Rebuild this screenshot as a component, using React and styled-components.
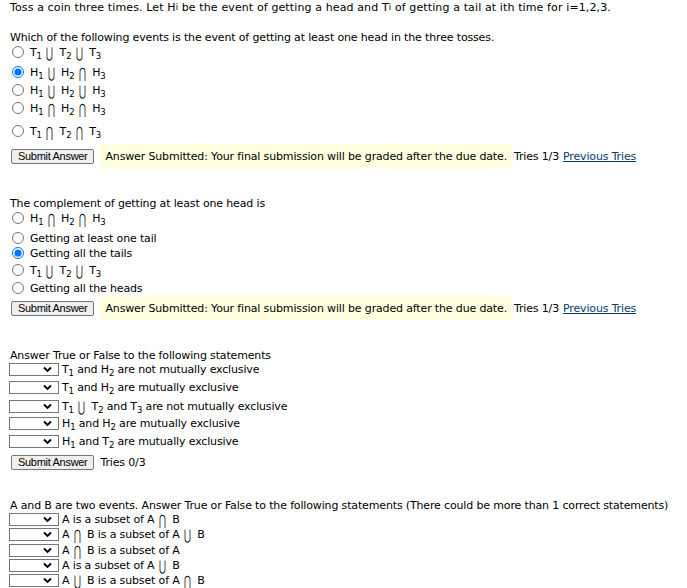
import React from "react";
import styled, { createGlobalStyle } from "styled-components";

const GlobalStyle = createGlobalStyle`
  body {
    margin: 0;
    background: #fff;
    color: #000;
    font-family: "DejaVu Sans", Verdana, sans-serif;
    font-size: 11px;
    letter-spacing: -0.15px;
  }
`;

const Page = styled.div`
  display: flex;
  flex-direction: column;
  align-items: flex-start;
  padding-left: 10px;
`;

const Line = styled.div`
  display: flex;
  align-items: center;
  height: ${(p) => p.$h || 14}px;
  margin-top: ${(p) => p.$mt || 0}px;
  white-space: nowrap;
  ${(p) => (p.$ls != null ? `letter-spacing: ${p.$ls}px;` : "")}
`;

const Option = styled.label`
  display: flex;
  align-items: center;
  height: 16px;
  margin-top: ${(p) => p.$mt || 0}px;
  padding-left: 2px;
  white-space: nowrap;
`;

const Radio = styled.input.attrs({ type: "radio" })`
  width: 12px;
  height: 12px;
  margin: 0 6px 0 0;
  accent-color: #0075ff;
`;

const Sub = styled.sub`
  font-size: 8.5px;
  vertical-align: -2.5px;
  line-height: 0;
`;

const Op = styled.span`
  display: inline-block;
  width: 8px;
  margin: 0 2px 0 1px;
  font-size: 14px;
  line-height: 10px;
  vertical-align: -2px;
  transform: scale(0.6, 1.05);
  transform-origin: left center;
`;

const SubmitButton = styled.button`
  height: 15px;
  margin-left: 1px;
  padding: 0 6px;
  border: 1px solid #767676;
  border-radius: 2px;
  background: #efefef;
  color: #000;
  font-family: "Liberation Sans", Arial, sans-serif;
  font-size: 11px;
  letter-spacing: -0.3px;
  line-height: 13px;
`;

const Notice = styled.span`
  display: flex;
  align-items: center;
  align-self: stretch;
  margin-left: 6px;
  padding: 0 4px 0 5px;
  background: #ffffe0;
`;

const Tries = styled.span`
  margin-left: ${(p) => p.$ml ?? 3}px;
`;

const PrevLink = styled.a`
  margin-left: 4px;
  color: #0b3a6b;
  text-decoration: underline;
`;

const Statement = styled.div`
  display: flex;
  align-items: center;
  height: ${(p) => p.$h || 16}px;
  margin-top: ${(p) => p.$mt || 0}px;
  margin-left: -1px;
  white-space: nowrap;
`;

const SelectBox = styled.span`
  position: relative;
  display: inline-flex;
  align-items: center;
  box-sizing: border-box;
  width: 50px;
  height: 13px;
  margin-right: 3px;
  border: 1px solid #767676;
  background: #fff;
`;

const HiddenSelect = styled.select`
  appearance: none;
  width: 100%;
  height: 100%;
  padding: 0;
  border: 0;
  background: transparent;
  font: inherit;
  outline: none;
`;

const Chevron = styled.svg`
  position: absolute;
  right: 6px;
  top: 2px;
  pointer-events: none;
`;

// "T1 u T2 n A" -> subscripts and set operators
const expr = (str) =>
  str.split(" ").map((tok, i) => {
    const sp = i > 0 ? " " : "";
    if (tok === "u") return <React.Fragment key={i}>{sp}<Op>⋃</Op></React.Fragment>;
    if (tok === "n") return <React.Fragment key={i}>{sp}<Op>⋂</Op></React.Fragment>;
    const m = tok.match(/^([A-Z])(\d)$/);
    if (m)
      return (
        <React.Fragment key={i}>
          {sp}
          {m[1]}
          <Sub>{m[2]}</Sub>
        </React.Fragment>
      );
    return sp + tok;
  });

const q1 = [
  ["T1 u T2 u T3", 0],
  ["H1 u H2 n H3", 4, true],
  ["H1 u H2 u H3", 2],
  ["H1 n H2 n H3", 2],
  ["T1 n T2 n T3", 7],
];

const q2 = [
  ["H1 n H2 n H3", 0],
  ["Getting at least one tail", 4],
  ["Getting all the tails", -1, true],
  ["T1 u T2 u T3", 1],
  ["Getting all the heads", 2],
];

const q3 = [
  ["T1 and H2 are not mutually exclusive", -1],
  ["T1 and H2 are mutually exclusive", 2],
  ["T1 u T2 and T3 are not mutually exclusive", 3],
  ["H1 and H2 are mutually exclusive", 1],
  ["H1 and T2 are mutually exclusive", 2],
];

// tighter list: 15px rows
const q4 = [
  ["A is a subset of A n B", 0],
  ["A n B is a subset of A u B", 0],
  ["A n B is a subset of A", 1],
  ["A is a subset of A u B", 0],
  ["A u B is a subset of A n B", 0],
];

const TrueFalse = () => (
  <SelectBox>
    <HiddenSelect defaultValue="">
      <option value=""></option>
      <option value="true">True</option>
      <option value="false">False</option>
    </HiddenSelect>
    <Chevron width="9" height="7" viewBox="0 0 9 7">
      <path d="M1 1.5 L4.5 5 L8 1.5" fill="none" stroke="#000" strokeWidth="1.9" />
    </Chevron>
  </SelectBox>
);

const Radios = ({ name, items }) =>
  items.map(([label, mt, checked]) => (
    <Option key={label} $mt={mt}>
      <Radio name={name} defaultChecked={!!checked} />
      <span>{expr(label)}</span>
    </Option>
  ));

const Statements = ({ items, h }) =>
  items.map(([label, mt]) => (
    <Statement key={label} $mt={mt} $h={h}>
      <TrueFalse />
      <span>{expr(label)}</span>
    </Statement>
  ));

const Submitted = ({ mt }) => (
  <Line $h={24} $mt={mt}>
    <SubmitButton>Submit Answer</SubmitButton>
    <Notice>Answer Submitted: Your final submission will be graded after the due date.</Notice>
    <Tries>Tries 1/3</Tries>
    <PrevLink href="#">Previous Tries</PrevLink>
  </Line>
);

const App = () => (
  <>
    <GlobalStyle />
    <Page>
      <Line $ls={0.12}>
        Toss a coin three times. Let H<Sub>i</Sub>&nbsp;be the event of getting a head and T<Sub>i</Sub>&nbsp;of
        getting a tail at ith time for i=1,2,3.
      </Line>

      <Line $mt={16}>Which of the following events is the event of getting at least one head in the three tosses.</Line>
      <Radios name="q1" items={q1} />
      <Submitted mt={5} />

      <Line $mt={28}>The complement of getting at least one head is</Line>
      <Radios name="q2" items={q2} />
      <Submitted />

      <Line $mt={28}>Answer True or False to the following statements</Line>
      <Statements items={q3} />
      <Line $h={24} $mt={1}>
        <SubmitButton>Submit Answer</SubmitButton>
        <Tries $ml={6}>Tries 0/3</Tries>
      </Line>

      <Line $mt={24}>
        A and B are two events. Answer True or False to the following statements (There could be more than 1 correct
        statements)
      </Line>
      <Statements items={q4} h={15} />
    </Page>
  </>
);

export default App;
